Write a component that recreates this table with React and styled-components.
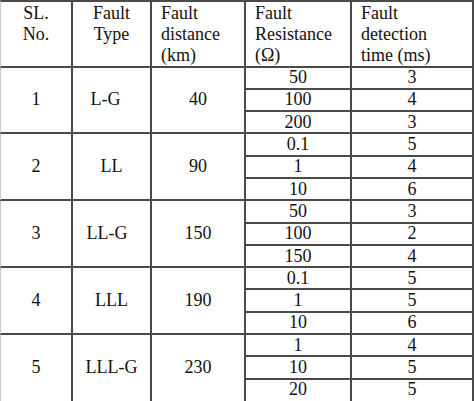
import React from "react";
import styled, { createGlobalStyle } from "styled-components";

const Global = createGlobalStyle`
  html, body { margin: 0; padding: 0; background: #ffffff; }
  body { overflow: hidden; }
`;

const LINE = "#4a4a4a";

const Table = styled.div`
  display: grid;
  grid-template-columns: 73px 79px 94px 106px 122px;
  grid-template-rows: 67.5px repeat(15, 22.3px);
  width: 474px;
  font-family: "Liberation Serif", "Times New Roman", serif;
  font-size: 18px;
  color: #111111;
  background: #ffffff;
`;

const Cell = styled.div`
  box-sizing: border-box;
  border-right: 2px solid ${LINE};
  border-bottom: ${(p) => (p.$open ? "none" : `2px solid ${LINE}`)};
  border-left: ${(p) => (p.$first ? "1px solid #c9c9c9" : "none")};
  min-width: 0;
`;

const HeaderCell = styled(Cell)`
  border-top: 2px solid ${LINE};
  padding: 1px 0 0 ${(p) => (p.$center ? "0" : "9px")};
  line-height: 21px;
  text-align: ${(p) => (p.$center ? "center" : "left")};
  white-space: nowrap;
`;

const MergedCell = styled(Cell)`
  grid-row: span 3;
  display: flex;
  align-items: center;
  justify-content: center;
  padding-right: ${(p) => p.$shift || 0}px;
  padding-bottom: ${(p) => (p.$open ? "2px" : "0")};
`;

const SubCell = styled(Cell)`
  display: flex;
  align-items: center;
  justify-content: center;
  padding-bottom: ${(p) => (p.$open ? "2px" : "0")};
`;

const groups = [
  { no: "1", type: "L-G", shift: 12, dist: "40", rows: [["50", "3"], ["100", "4"], ["200", "3"]] },
  { no: "2", type: "LL", shift: 0, dist: "90", rows: [["0.1", "5"], ["1", "4"], ["10", "6"]] },
  { no: "3", type: "LL-G", shift: 9, dist: "150", rows: [["50", "3"], ["100", "2"], ["150", "4"]] },
  { no: "4", type: "LLL", shift: 0, dist: "190", rows: [["0.1", "5"], ["1", "5"], ["10", "6"]] },
  { no: "5", type: "LLL-G", shift: 0, dist: "230", rows: [["1", "4"], ["10", "5"], ["20", "5"]] },
];

export default function App() {
  return (
    <>
      <Global />
      <Table>
        <HeaderCell $first $center>
          SL.<br />No.
        </HeaderCell>
        <HeaderCell $center>
          Fault<br />Type
        </HeaderCell>
        <HeaderCell>
          Fault<br />distance<br />(km)
        </HeaderCell>
        <HeaderCell>
          Fault<br />Resistance<br />(Ω)
        </HeaderCell>
        <HeaderCell>
          Fault<br />detection<br />time (ms)
        </HeaderCell>
        {groups.map((g, gi) => {
          const lastGroup = gi === groups.length - 1;
          return (
            <React.Fragment key={g.no}>
              <MergedCell $first $open={lastGroup}>{g.no}</MergedCell>
              <MergedCell $shift={g.shift} $open={lastGroup}>{g.type}</MergedCell>
              <MergedCell $open={lastGroup}>{g.dist}</MergedCell>
              {g.rows.map(([r, t], i) => {
                const open = lastGroup && i === g.rows.length - 1;
                return (
                  <React.Fragment key={i}>
                    <SubCell $open={open}>{r}</SubCell>
                    <SubCell $open={open}>{t}</SubCell>
                  </React.Fragment>
                );
              })}
            </React.Fragment>
          );
        })}
      </Table>
    </>
  );
}
